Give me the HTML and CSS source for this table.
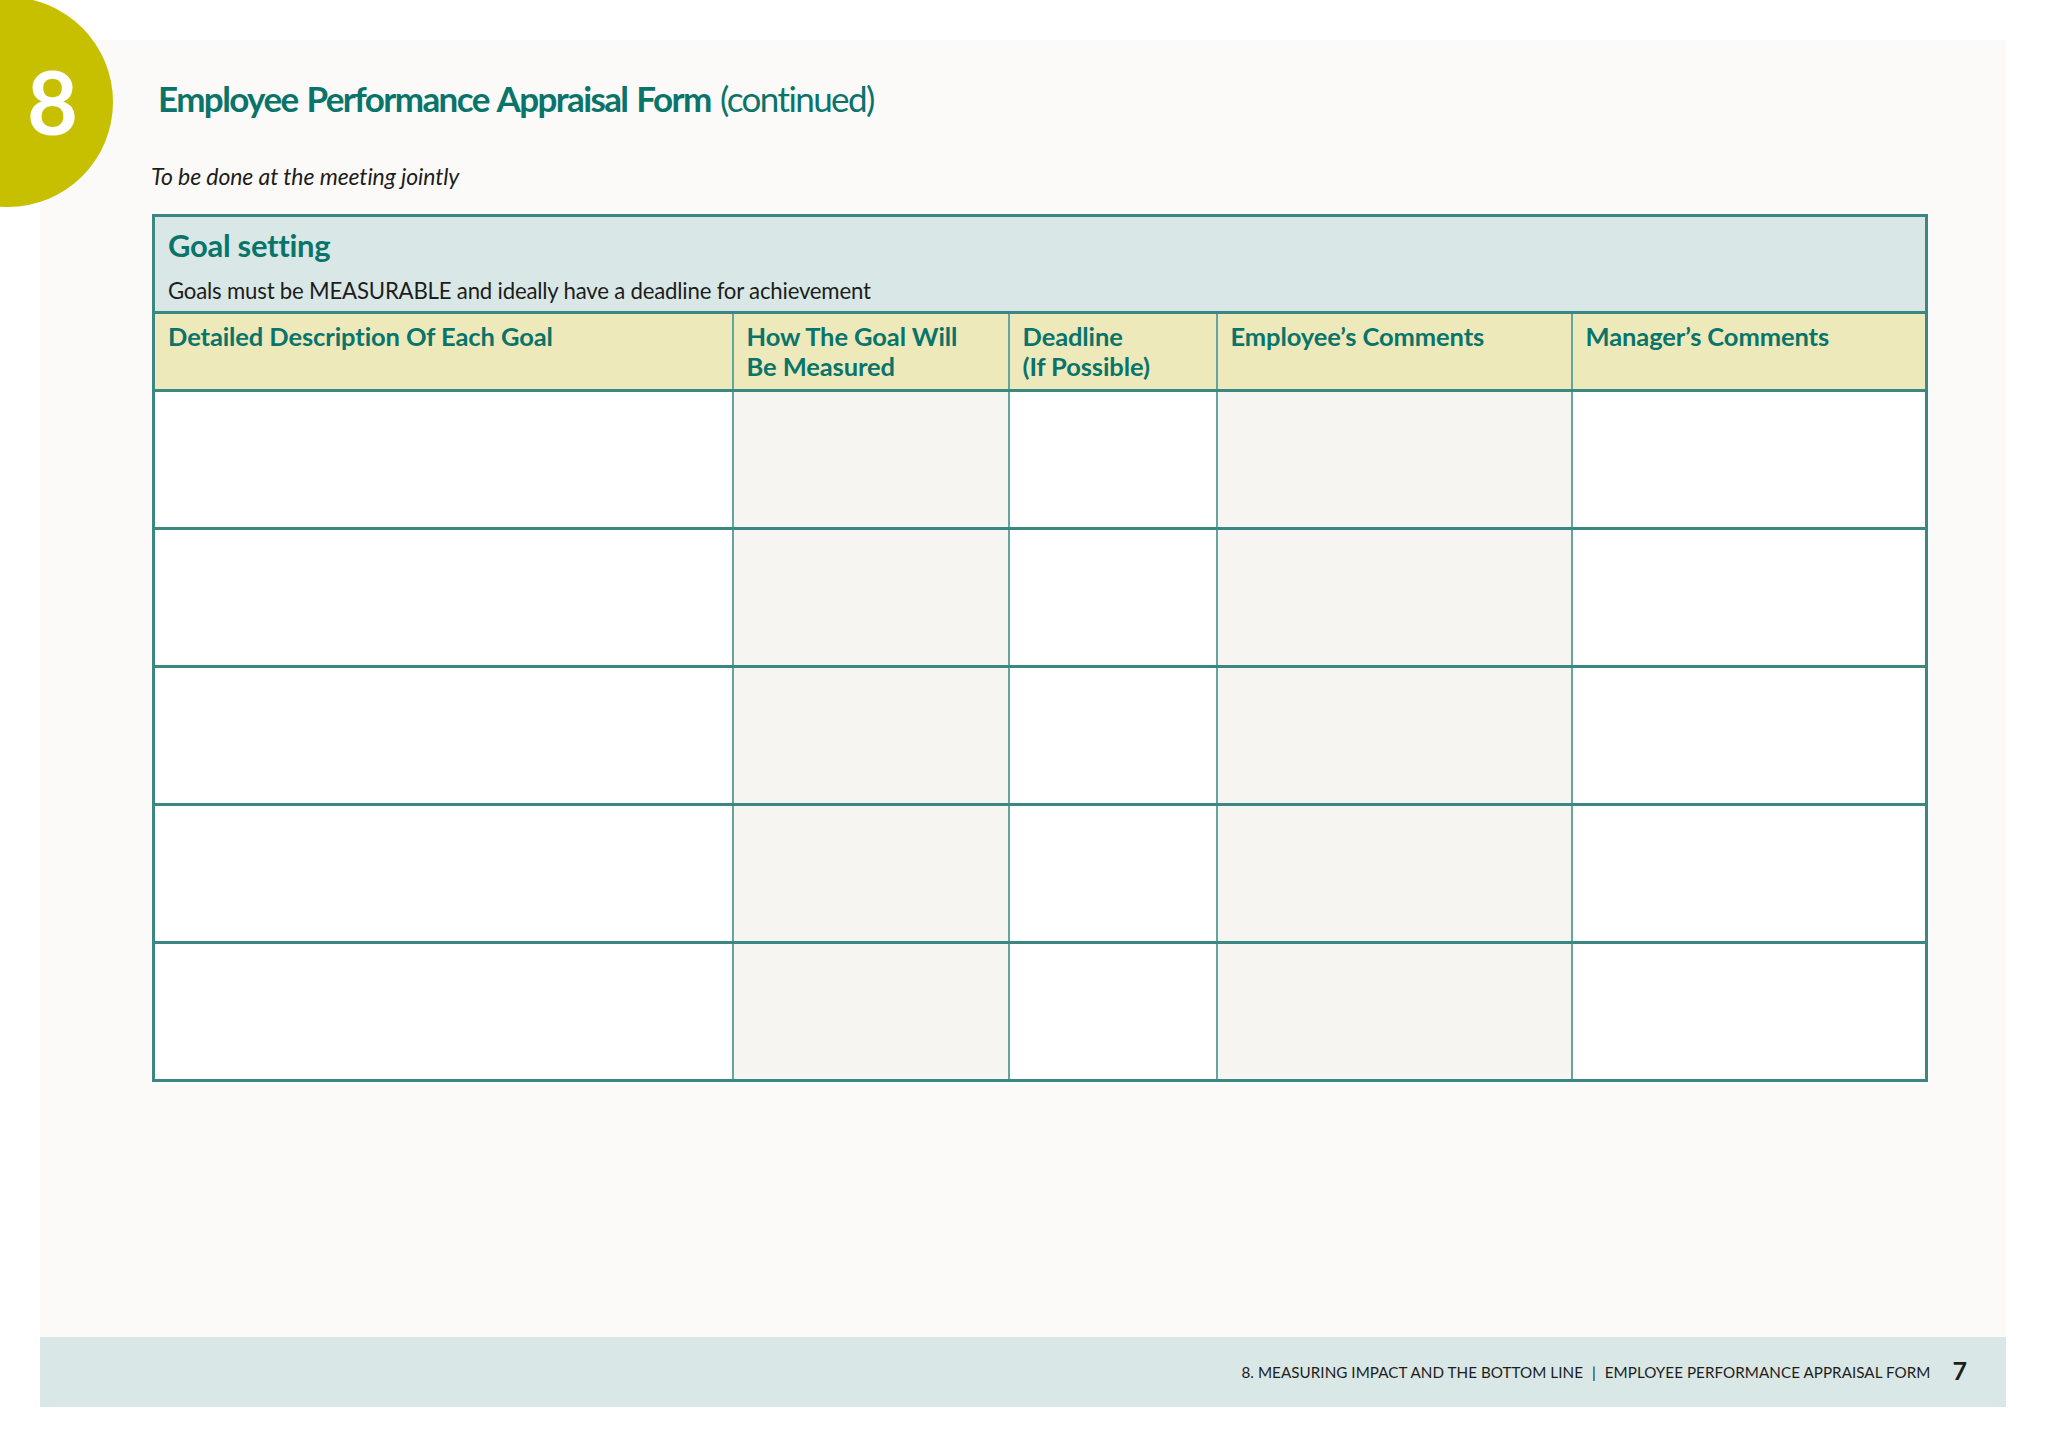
FILE: index.html
```html
<!DOCTYPE html>
<html lang="en">
<head>
<meta charset="utf-8">
<title>Employee Performance Appraisal Form (continued)</title>
<link rel="stylesheet" href="styles.css">
</head>
<body>
<div class="badge"><span>8</span></div>
<div class="page">
  <header class="head">
    <h1 class="title"><strong>Employee Performance Appraisal Form</strong> (continued)</h1>
    <p class="intro">To be done at the meeting jointly</p>
  </header>
  <table class="goals">
    <colgroup>
      <col class="c1"><col class="c2"><col class="c3"><col class="c4"><col class="c5">
    </colgroup>
    <thead>
      <tr class="band">
        <th colspan="5">
          <div class="band-title">Goal setting</div>
          <div class="band-sub">Goals must be MEASURABLE and ideally have a deadline for achievement</div>
        </th>
      </tr>
      <tr class="cols">
        <th>Detailed Description Of Each Goal</th>
        <th>How The Goal Will<br>Be Measured</th>
        <th>Deadline<br>(If Possible)</th>
        <th>Employee’s Comments</th>
        <th>Manager’s Comments</th>
      </tr>
    </thead>
    <tbody>
      <tr><td></td><td class="shade"></td><td></td><td class="shade"></td><td></td></tr>
      <tr><td></td><td class="shade"></td><td></td><td class="shade"></td><td></td></tr>
      <tr><td></td><td class="shade"></td><td></td><td class="shade"></td><td></td></tr>
      <tr><td></td><td class="shade"></td><td></td><td class="shade"></td><td></td></tr>
      <tr><td></td><td class="shade"></td><td></td><td class="shade"></td><td></td></tr>
    </tbody>
  </table>
  <footer class="foot">
    <span class="foot-text">8. MEASURING IMPACT AND THE BOTTOM LINE <span class="sep">|</span> EMPLOYEE PERFORMANCE APPRAISAL FORM</span>
    <span class="pageno">7</span>
  </footer>
</div>
</body>
</html>
```

FILE: styles.css
```css
html, body {
  margin: 0;
  padding: 0;
  background: #ffffff;
}

body {
  font-family: Lato, "Open Sans", sans-serif;
  color: #1d1d1b;
  padding: 40px 0 0 40px;
}

.badge {
  position: absolute;
  left: -97px;
  top: -3px;
  width: 210px;
  height: 210px;
  border-radius: 50%;
  background: #c7c000;
  display: flex;
  align-items: center;
  justify-content: flex-end;
  z-index: 2;
}

.badge span {
  color: #ffffff;
  font-family: Lato, sans-serif;
  font-weight: 700;
  font-size: 88px;
  line-height: 1;
  margin-right: 35px;
  margin-top: -2px;
}

.page {
  width: 1966px;
  height: 1367px;
  background: #fbfaf8;
  display: flex;
  flex-direction: column;
  box-sizing: border-box;
  padding-left: 112px;
}

.head {
  padding-left: 6px;
}

.title {
  margin: 37px 0 0 0;
  font-size: 35px;
  line-height: 43px;
  font-weight: 400;
  color: #0a746a;
  letter-spacing: -1.6px;
  word-spacing: 2px;
}

.title strong {
  font-weight: 700;
}

.intro {
  margin: 43px 0 0 -7px;
  font-size: 23px;
  line-height: 26px;
  font-style: italic;
  color: #1d1d1b;
  letter-spacing: -0.1px;
}

.goals {
  margin-top: 25px;
  width: 1773px;
  border-collapse: collapse;
  table-layout: fixed;
  border: 3px solid #3b8782;
}

.c1 { width: 579px; }
.c2 { width: 276px; }
.c3 { width: 208px; }
.c4 { width: 355px; }
.c5 { width: 355px; }

.band th {
  background: #d9e8e7;
  text-align: left;
  font-weight: 400;
  padding: 10px 13px 0 13px;
  height: 97px;
  vertical-align: top;
  box-sizing: border-box;
  border-bottom: 3px solid #3b8782;
}

.band-title {
  font-size: 31px;
  line-height: 36px;
  font-weight: 700;
  color: #0a746a;
  letter-spacing: -0.3px;
}

.band-sub {
  margin-top: 14px;
  font-size: 22.2px;
  line-height: 28px;
  color: #1d1d1b;
  letter-spacing: -0.2px;
}

.cols th {
  background: #ede9bb;
  text-align: left;
  vertical-align: top;
  font-size: 25.5px;
  line-height: 30px;
  font-weight: 700;
  color: #0a746a;
  letter-spacing: -0.1px;
  padding: 7px 13px 0 13px;
  height: 78px;
  box-sizing: border-box;
  border-left: 2px solid #62a6a1;
  border-bottom: 3px solid #3b8782;
}

tbody td {
  height: 138px;
  box-sizing: border-box;
  background: #ffffff;
  border-left: 2px solid #62a6a1;
  border-bottom: 3px solid #3b8782;
  padding: 0;
}

tbody td.shade {
  background: #f6f5f1;
}

.foot {
  margin-top: auto;
  margin-left: -112px;
  height: 70px;
  background: #d9e7e6;
  display: flex;
  align-items: center;
  justify-content: flex-end;
  padding-right: 39px;
  gap: 22px;
}

.foot-text {
  font-size: 15.2px;
  color: #1d1d1b;
  letter-spacing: 0.05px;
}

.sep {
  margin: 0 5px;
}

.pageno {
  font-size: 25px;
  font-weight: 700;
  color: #1d1d1b;
  margin-top: -5px;
}
```
